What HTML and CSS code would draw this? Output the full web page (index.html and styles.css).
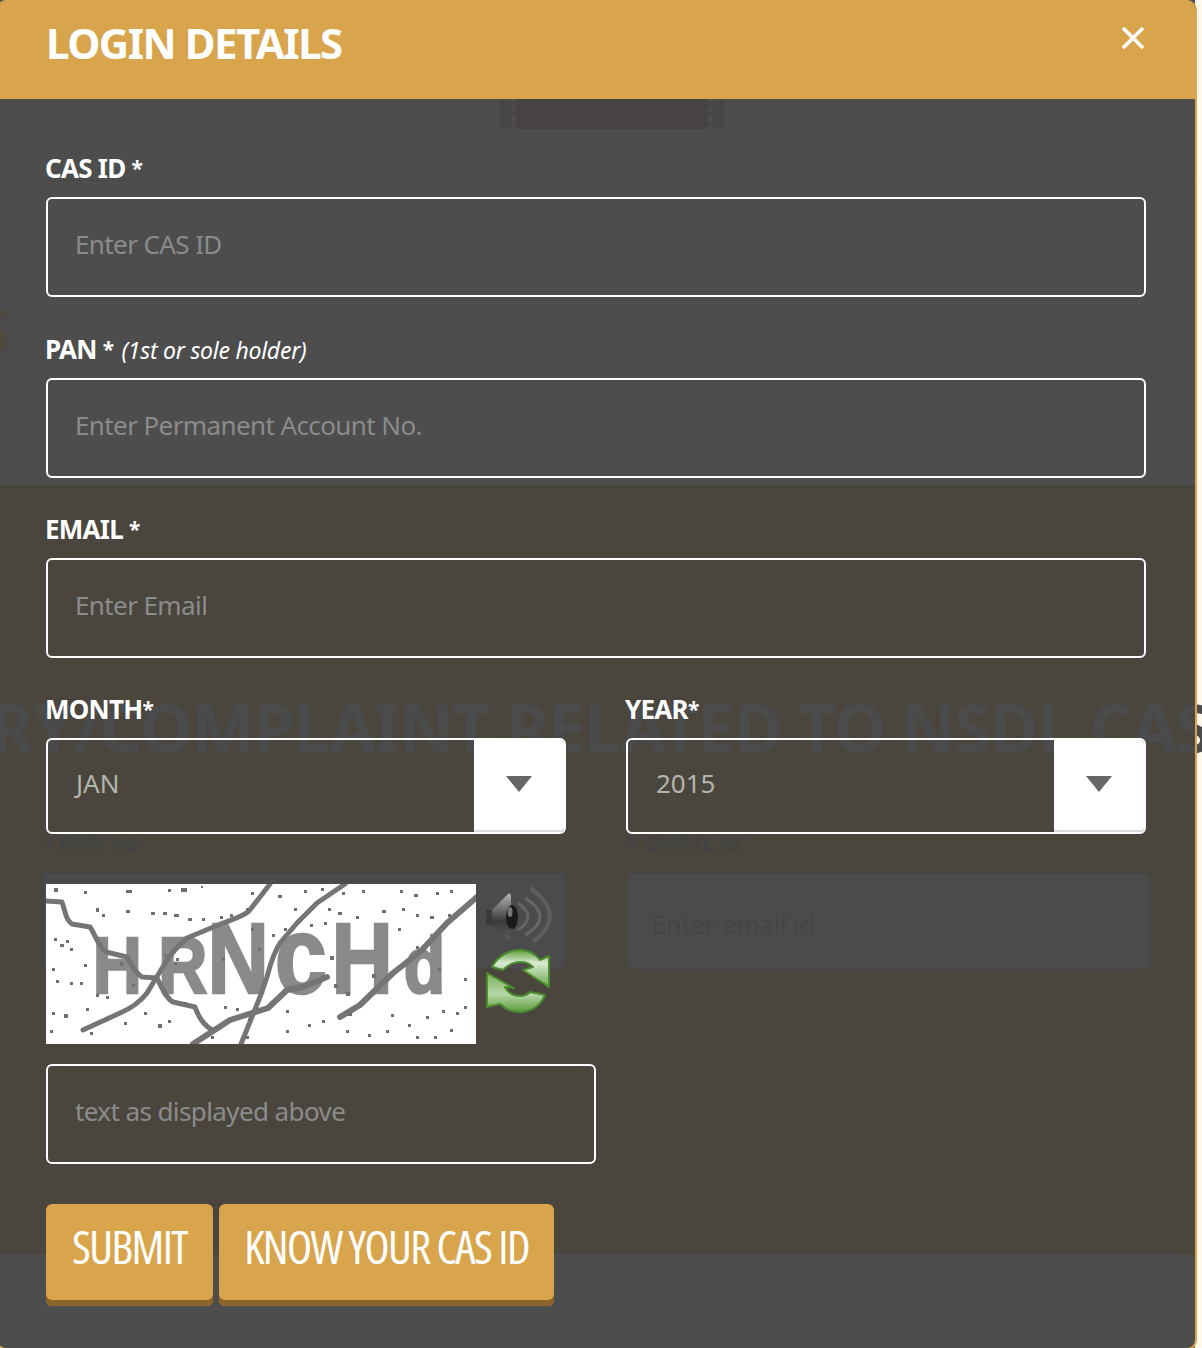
FILE: index.html
```html
<!DOCTYPE html>
<html lang="en">
<head>
<meta charset="utf-8">
<title>Login Details</title>
<link rel="stylesheet" href="styles.css">
</head>
<body>
<div class="backdrop" aria-hidden="true">
  <div class="ghost-band"></div>
  <div class="ghost-film"></div>
  <div class="ghost-line"></div>
  <div class="ghost-s">S</div>
  <div class="ghost-title">RY/COMPLAINT RELATED TO NSDL CAS</div>
  <div class="ghost-label ghost-pan">* PAN no</div>
  <div class="ghost-label ghost-email">* EMAIL id</div>
  <div class="ghost-box ghost-box-pan"></div>
  <div class="ghost-box ghost-box-email">Enter email id</div>
</div>
<main class="modal">
  <header class="modal-head">
    <h1>LOGIN DETAILS</h1>
    <svg class="close" viewBox="0 0 24 24" width="24" height="24"><path d="M2 2 22 22M22 2 2 22"/></svg>
  </header>
  <form class="modal-body">
    <label class="field">
      <span class="label">CAS ID <span class="req">*</span></span>
      <span class="input">Enter CAS ID</span>
    </label>
    <label class="field">
      <span class="label">PAN <span class="req">*</span> <em>(1st or sole holder)</em></span>
      <span class="input">Enter Permanent Account No.</span>
    </label>
    <label class="field">
      <span class="label">EMAIL <span class="req">*</span></span>
      <span class="input">Enter Email</span>
    </label>
    <div class="two-col">
      <label class="field">
        <span class="label">MONTH<span class="req">*</span></span>
        <span class="select"><span class="select-value">JAN</span><span class="select-arrow"><i></i></span></span>
      </label>
      <label class="field">
        <span class="label">YEAR<span class="req">*</span></span>
        <span class="select"><span class="select-value">2015</span><span class="select-arrow"><i></i></span></span>
      </label>
    </div>
    <div class="captcha-row">
      <svg class="captcha" viewBox="0 0 430 160" width="430" height="160">
        <rect width="430" height="160" fill="#fff"/>
        <g class="captcha-soft">
          <text class="captcha-text" transform="scale(.85 1)" y="109"><tspan x="55">H</tspan><tspan x="132">R</tspan><tspan x="190" class="big">N</tspan><tspan x="269" class="huge">c</tspan><tspan x="336" class="big">H</tspan><tspan x="421">d</tspan></text>
          <g class="captcha-lines">
            <path d="M0 17 16 18C20 30 20 36 26 40L44 43C50 52 52 62 60 68L81 73C86 82 90 90 96 93L111 94C116 104 120 114 127 118L149 123C152 132 156 140 166 146"/>
            <path d="M37 146 74 129C86 124 94 118 101 109L121 76C128 66 134 60 141 54L177 39C190 34 198 32 203 27L214 13 224 0"/>
            <path d="M299 0 271 19 251 39 234 59C226 72 224 82 221 93L214 113 195 160"/>
            <path class="thick" d="M147 160 184 136 222 124 241 106 257 103 281 93"/>
            <path class="thick" d="M294 133 314 121 347 89 374 68 401 39 431 13"/>
          </g>
          <path class="captcha-noise" d="M8 4h4v4h-4zM38 7h3v3h-3zM80 6h6v3h-6zM122 5h3v3h-3zM135 4h6v4h-6zM155 2h2v2h-2zM205 8h3v3h-3zM216 6h3v3h-3zM232 11h4v3h-4zM258 6h3v3h-3zM275 4h3v3h-3zM296 8h3v3h-3zM316 6h3v3h-3zM354 6h3v3h-3zM368 10h4v3h-4zM390 8h3v3h-3zM404 6h3v3h-3zM50 24h3v4h-3zM56 30h3v3h-3zM80 26h4v3h-4zM105 28h4v3h-4zM117 28h4v3h-4zM128 30h5v3h-5zM142 34h4v3h-4zM156 34h3v3h-3zM174 32h3v3h-3zM184 30h3v3h-3zM200 24h3v3h-3zM248 24h3v3h-3zM264 40h3v3h-3zM278 38h3v3h-3zM292 28h4v3h-4zM310 32h3v3h-3zM336 26h4v3h-4zM356 24h3v3h-3zM370 30h3v3h-3zM384 32h4v3h-4zM402 30h3v3h-3zM8 54h3v3h-3zM20 56h3v3h-3zM14 60h4v3h-4zM24 64h3v3h-3zM6 84h3v3h-3zM24 98h3v3h-3zM34 98h3v3h-3zM38 80h3v3h-3zM10 96h3v3h-3zM40 124h3v3h-3zM50 110h3v3h-3zM74 78h3v4h-3zM86 100h3v3h-3zM60 112h3v3h-3zM118 70h3v3h-3zM130 74h3v3h-3zM176 74h3v3h-3zM205 44h3v3h-3zM212 64h3v3h-3zM226 50h3v3h-3zM238 44h3v3h-3zM284 72h4v4h-4zM288 100h4v4h-4zM300 108h4v4h-4zM326 90h4v4h-4zM352 44h3v3h-3zM370 62h3v3h-3zM392 84h3v3h-3zM418 94h3v3h-3zM6 128h3v3h-3zM18 130h4v4h-4zM44 148h3v3h-3zM60 134h3v3h-3zM78 138h3v3h-3zM98 128h3v3h-3zM112 140h4v4h-4zM122 136h3v3h-3zM138 118h3v3h-3zM150 126h3v4h-3zM178 122h3v3h-3zM190 124h3v3h-3zM202 134h3v3h-3zM240 146h3v3h-3zM262 140h3v3h-3zM276 136h3v3h-3zM302 128h4v4h-4zM322 150h3v3h-3zM345 130h3v3h-3zM362 140h3v3h-3zM380 132h3v3h-3zM396 126h3v3h-3zM410 128h3v3h-3zM418 122h3v3h-3zM4 146h3v3h-3zM340 146h3v3h-3zM370 152h3v3h-3zM388 152h3v3h-3zM404 145h3v3h-3zM165 152h3v3h-3zM200 152h3v3h-3zM240 126h3v3h-3zM300 146h3v3h-3zM128 78h3v3h-3zM282 24h3v3h-3z"/>
        </g>
      </svg>
      <div class="captcha-tools">
        <svg class="speaker" viewBox="0 0 66 58" width="66" height="58">
          <defs>
            <linearGradient id="cone" x1="0" y1="0" x2="0" y2="1"><stop offset="0" stop-color="#b5b5b5"/><stop offset=".6" stop-color="#3a3a3a"/><stop offset="1" stop-color="#5a5a5a"/></linearGradient>
          </defs>
          <path class="wave" d="M32 15Q52 29 32 42"/>
          <path class="wave" d="M39 10Q69 29 39 47"/>
          <path class="wave wave-outer" d="M44 0Q82 27 47 54"/>
          <rect x="0" y="22" width="7" height="15" rx="1" fill="#3a3a3a"/>
          <path d="M6 22 23 5 25 7V50L23 52 6 37Z" fill="url(#cone)"/>
          <ellipse cx="26" cy="29" rx="6" ry="12" fill="#1a1a1a"/>
          <ellipse cx="24" cy="24" rx="2.5" ry="5" fill="#777"/>
        </svg>
        <svg class="refresh" viewBox="0 0 64 64" width="64" height="64">
          <defs>
            <linearGradient id="arrow" x1="0" y1="0" x2="0" y2="1"><stop offset="0" stop-color="#5f9f3f"/><stop offset=".35" stop-color="#d9ead0"/><stop offset="1" stop-color="#69a84a"/></linearGradient>
            <linearGradient id="arrow-low" x1="0" y1="0" x2="0" y2="1"><stop offset="0" stop-color="#79b35b"/><stop offset=".55" stop-color="#b6d6a3"/><stop offset="1" stop-color="#5a9a3b"/></linearGradient>
          </defs>
          <path d="M6 18C12 6 24 1 34 1 42 1 50 5 54 11L63 7V38L37 21 47 18C42 13 38 13 34 13 28 13 22 16 17 21Z" fill="url(#arrow)" stroke="#4b8a2e" stroke-width="2" stroke-linejoin="round"/>
          <path d="M1 24 28 39 19 38C22 44 28 47 34 47 38 47 41 46 44 43L59 46C54 58 44 63 34 63 26 63 19 60 14 55L1 58Z" fill="url(#arrow-low)" stroke="#4b8a2e" stroke-width="2" stroke-linejoin="round"/>
        </svg>
      </div>
    </div>
    <label class="field field-captcha">
      <span class="input">text as displayed above</span>
    </label>
    <div class="actions">
      <button type="button" class="btn btn-submit">SUBMIT</button>
      <button type="button" class="btn btn-cas">KNOW YOUR CAS ID</button>
    </div>
  </form>
</main>
</body>
</html>
```

FILE: styles.css
```css
* { box-sizing: border-box; }
html, body { margin: 0; height: 100%; }
body {
  position: relative;
  width: 1202px;
  height: 1348px;
  overflow: hidden;
  background: #fdf7ec;
  font-family: "Noto Sans", "Open Sans", sans-serif;
}
.backdrop { position: absolute; inset: 0 7px 0 0; background: #4d4d4d; }
.ghost-band { position: absolute; left: 0; right: 0; top: 485px; height: 769px; background: #4a463e; }
.ghost-film {
  position: absolute; left: 500px; top: 99px; width: 224px; height: 30px;
  background: linear-gradient(#474342, #474342) center / 190px 100% no-repeat, #494646;
}
.ghost-film::before, .ghost-film::after {
  content: ""; position: absolute; top: -4px; bottom: 0; width: 6px;
  background: radial-gradient(circle, #4f4d4d 2px, transparent 3px) 0 0 / 6px 9.5px repeat-y;
}
.ghost-film::before { left: 10px; }
.ghost-film::after { right: 11px; }
.ghost-line { position: absolute; left: 0; right: 0; top: 180px; height: 1px; background: #4a4843; }
.ghost-s { position: absolute; left: -22px; top: 288px; font-size: 60px; font-weight: 700; color: #4f4a3f; }
.ghost-title {
  position: absolute; left: -10px; top: 681px; white-space: nowrap;
  font-size: 67px; font-weight: 700; letter-spacing: -1.4px; color: #4a4b4a;
}
.ghost-label { position: absolute; top: 827px; font-size: 22px; font-weight: 700; color: #434341; }
.ghost-pan { left: 42px; }
.ghost-email { left: 627px; }
.ghost-box {
  position: absolute; top: 872px; height: 98px;
  background: #4b4b4b; border: 2px solid #464646; border-radius: 5px;
  color: #454545; font-size: 26px; padding: 32px 24px; letter-spacing: -.4px;
}
.ghost-box-pan { left: 42px; width: 524px; }
.ghost-box-email { left: 626px; width: 525px; }

.modal {
  position: absolute; left: -4px; top: 0; width: 1201px; height: 1350px;
  border: 2px solid #d9a54c; border-top: 0; border-radius: 10px;
  overflow: hidden;
}
.modal-head {
  height: 99px; background: #d9a54c;
  display: flex; justify-content: space-between; align-items: flex-start;
  padding: 17px 50px 0 48px;
}
.modal-head h1 {
  margin: 0; font-size: 42px; line-height: 52px; font-weight: 700; color: #fff;
  letter-spacing: -1.5px;
}
.close { margin-top: 9px; fill: none; stroke: #fff; stroke-width: 3.6; }
.modal-body { padding: 52px 49px 0 48px; color: #fff; }
.field { display: block; }
.field + .field { margin-top: 35px; }
.field + .field + .field { margin-top: 34px; }
.label {
  display: block; height: 34px; margin-left: -1px; font-size: 26px; line-height: 34px; font-weight: 700;
  letter-spacing: -.75px; color: #fff;
}
.req { font-size: 21px; vertical-align: 2px; }
.label em { font-size: 23px; font-weight: 400; letter-spacing: -.25px; margin-left: 2px; }
.input {
  display: block; height: 100px; margin-top: 12px; border: 2px solid #fff; border-radius: 6px;
  padding: 27px 27px; font-size: 26px; line-height: 36px; color: #8b8b8b; letter-spacing: -.6px;
}
.two-col { display: grid; grid-template-columns: 520px 520px; gap: 60px; margin-top: 34px; }
.two-col .field { margin: 0; }
.select {
  display: flex; height: 96px; margin-top: 12px; border: 2px solid #fff; border-radius: 6px; overflow: hidden;
  font-size: 26px; line-height: 36px; color: #b4b4ae;
}
.select-value { flex: 1; padding: 25px 28px; }
.select-arrow {
  width: 90px; background: #fff; border-bottom: 2px solid #dcdcdc;
  display: flex; align-items: center; justify-content: center;
}
.select-arrow i {
  width: 0; height: 0; margin-top: -2px;
  border-left: 13px solid transparent; border-right: 13px solid transparent; border-top: 16px solid #666;
}
.captcha-row { display: flex; margin-top: 50px; height: 160px; }
.captcha { display: block; flex: none; }
.captcha-soft { filter: blur(.6px); }
.captcha-text {
  font-family: "Liberation Sans", sans-serif; font-size: 80px; font-weight: 700; fill: #8a8a8a;
  stroke: #8a8a8a; stroke-width: 2.5;
}
.captcha-text .big { font-size: 100px; }
.captcha-text .huge { font-size: 110px; }
.captcha-lines path { fill: none; stroke: #757575; stroke-width: 5; stroke-linecap: round; stroke-linejoin: round; }
.captcha-lines .thick { stroke-width: 6; }
.captcha-noise { fill: #707070; }
.captcha-tools { display: flex; flex-direction: column; margin-left: 10px; padding-top: 4px; }
.speaker, .refresh { display: block; overflow: visible; }
.refresh { margin-top: 3px; }
.wave { fill: none; stroke: #666; stroke-width: 3; }
.wave-outer { stroke: #5e5e5e; stroke-width: 4; }
.field-captcha { width: 550px; margin-top: 20px !important; }
.field-captcha .input { margin-top: 0; }
.actions { display: flex; gap: 6px; margin-top: 40px; }
.btn {
  height: 102px; padding: 0 0 18px; border: 0; border-radius: 6px;
  background: #d9a54c; box-shadow: inset 0 -6px 0 #8c6429;
  color: #fff; font-family: "Open Sans", sans-serif; font-stretch: 75%; font-size: 46px; font-weight: 400;
  letter-spacing: -1.6px; white-space: nowrap;
}
.btn-submit { width: 167px; }
.btn-cas { width: 335px; }
```
